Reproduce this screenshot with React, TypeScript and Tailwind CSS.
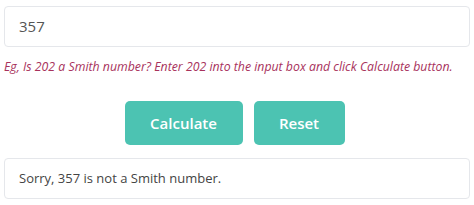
export default function App() {
  return (
    <div className="w-[474px] h-[205px] bg-white px-[4px] pt-[6px] font-['Open_Sans',sans-serif]">
      <div className="h-[41px] rounded-[4px] border border-[#e5e7eb] flex items-center px-[14px] text-[15px] text-[#555]">
        357
      </div>
      <p className="mt-[12px] text-[12.3px] italic text-[#a8325c] leading-[16px] whitespace-nowrap">
        Eg, Is 202 a Smith number? Enter 202 into the input box and click Calculate button.
      </p>
      <div className="mt-[26px] flex justify-center gap-[11px] pr-[5px]">
        <button className="w-[118px] h-[44px] rounded-[5px] bg-[#4cc3b2] text-white font-semibold text-[15px]">
          Calculate
        </button>
        <button className="w-[91px] h-[44px] rounded-[5px] bg-[#4cc3b2] text-white font-semibold text-[15px]">
          Reset
        </button>
      </div>
      <div className="mt-[13px] h-[41px] rounded-[4px] border border-[#e5e7eb] flex items-center px-[14px] text-[13px] text-[#444]">
        Sorry, 357 is not a Smith number.
      </div>
    </div>
  );
}
